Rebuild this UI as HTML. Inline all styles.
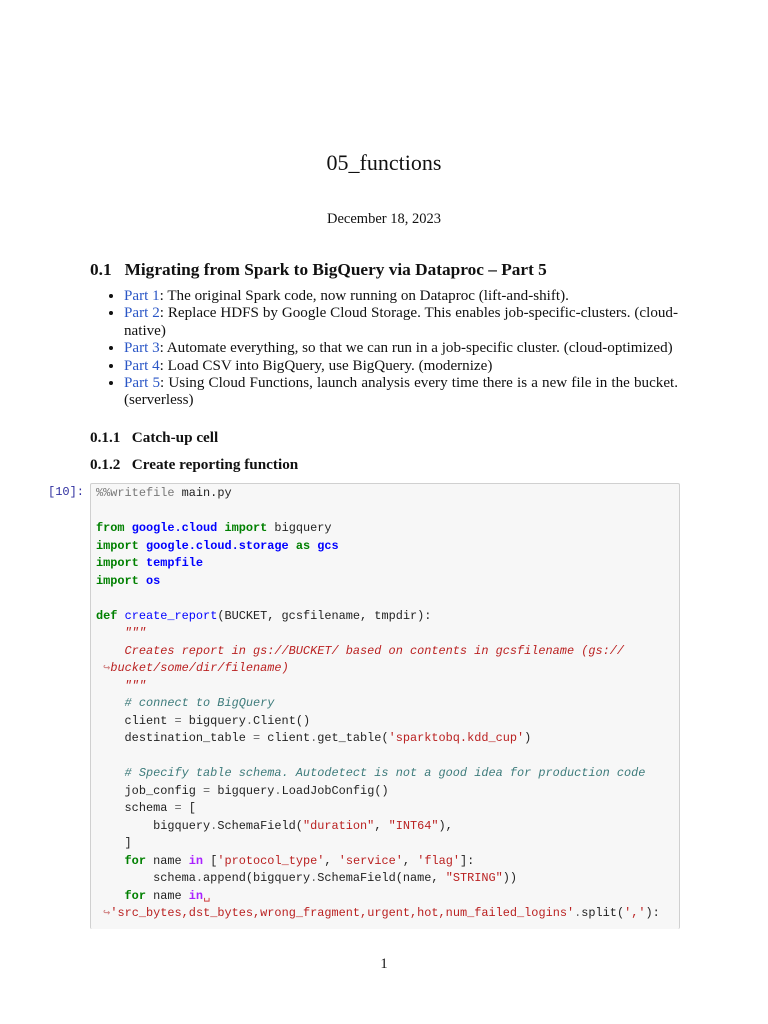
<!DOCTYPE html>
<html><head><meta charset="utf-8"><style>
body{margin:0;background:#fff;width:768px;height:1024px;position:relative;font-family:"Liberation Serif",serif;color:#111;overflow:hidden}
.a{position:absolute;white-space:nowrap}
.title{left:0;width:768px;text-align:center;top:150px;font-size:22px}
.date{left:0;width:768px;text-align:center;top:211px;font-size:14.5px}
.h{font-size:17.3px;font-weight:bold}
ul{position:absolute;left:102px;width:554px;margin:0;padding:0 0 0 22px;top:288px;font-size:15.1px;line-height:17.4px;text-align:justify}
li{margin:0}
.lk{color:#2a56c6}
.box{position:absolute;left:90px;top:483px;width:588px;height:445px;background:#f7f7f7;border:1px solid #d0d0d0;border-bottom:none;border-radius:2px}
pre{position:absolute;left:96px;top:485px;margin:0;font-family:"Liberation Mono",monospace;font-size:11.9px;line-height:17.5px;color:#222}
.k{color:#008000;font-weight:bold}.n{color:#0000ff;font-weight:bold}.s{color:#ba2121}.c{color:#3d7b7b;font-style:italic}.sd{color:#ba2121;font-style:italic}.m{color:#777}.o{color:#aa22ff;font-weight:bold}.g{color:#666}
.prompt{left:48px;top:485px;font-family:"Liberation Mono",monospace;font-size:12px;color:#3030a0}
</style></head><body>
<div class="a title">05_functions</div>
<div class="a date">December 18, 2023</div>
<div class="a h" style="left:90px;top:260px">0.1&nbsp;&nbsp;&nbsp;Migrating from Spark to BigQuery via Dataproc – Part 5</div>
<ul>
<li><span class="lk">Part 1</span>: The original Spark code, now running on Dataproc (lift-and-shift).</li>
<li><span class="lk">Part 2</span>: Replace HDFS by Google Cloud Storage. This enables job-specific-clusters. (cloud-native)</li>
<li><span class="lk">Part 3</span>: Automate everything, so that we can run in a job-specific cluster. (cloud-optimized)</li>
<li><span class="lk">Part 4</span>: Load CSV into BigQuery, use BigQuery. (modernize)</li>
<li><span class="lk">Part 5</span>: Using Cloud Functions, launch analysis every time there is a new file in the bucket. (serverless)</li>
</ul>
<div class="a h" style="left:90px;top:429px;font-size:15.2px">0.1.1&nbsp;&nbsp;&nbsp;Catch-up cell</div>
<div class="a h" style="left:90px;top:456px;font-size:15.2px">0.1.2&nbsp;&nbsp;&nbsp;Create reporting function</div>
<div class="a prompt">[10]:</div>
<div class="box"></div>
<pre><span class="m">%%writefile</span> main.py

<span class="k">from</span> <span class="n">google.cloud</span> <span class="k">import</span> bigquery
<span class="k">import</span> <span class="n">google.cloud.storage</span> <span class="k">as</span> <span class="n">gcs</span>
<span class="k">import</span> <span class="n">tempfile</span>
<span class="k">import</span> <span class="n">os</span>

<span class="k">def</span> <span style="color:#0000ff">create_report</span>(BUCKET, gcsfilename, tmpdir):
    <span class="sd">"""</span>
<span class="sd">    Creates report in gs://BUCKET/ based on contents in gcsfilename (gs://</span>
<span class="sd"> <span style="color:#d08080">↪</span>bucket/some/dir/filename)</span>
<span class="sd">    """</span>
    <span class="c"># connect to BigQuery</span>
    client <span class="g">=</span> bigquery<span class="g">.</span>Client()
    destination_table <span class="g">=</span> client<span class="g">.</span>get_table(<span class="s">'sparktobq.kdd_cup'</span>)

    <span class="c"># Specify table schema. Autodetect is not a good idea for production code</span>
    job_config <span class="g">=</span> bigquery<span class="g">.</span>LoadJobConfig()
    schema <span class="g">=</span> [
        bigquery<span class="g">.</span>SchemaField(<span class="s">"duration"</span>, <span class="s">"INT64"</span>),
    ]
    <span class="k">for</span> name <span class="o">in</span> [<span class="s">'protocol_type'</span>, <span class="s">'service'</span>, <span class="s">'flag'</span>]:
        schema<span class="g">.</span>append(bigquery<span class="g">.</span>SchemaField(name, <span class="s">"STRING"</span>))
    <span class="k">for</span> name <span class="o">in</span><span style="color:#d04040">␣</span>
 <span style="color:#d08080">↪</span><span class="s">'src_bytes,dst_bytes,wrong_fragment,urgent,hot,num_failed_logins'</span><span class="g">.</span>split(<span class="s">','</span>):</pre>
<div class="a" style="left:0;width:768px;text-align:center;top:956px;font-size:14.5px">1</div>
</body></html>
